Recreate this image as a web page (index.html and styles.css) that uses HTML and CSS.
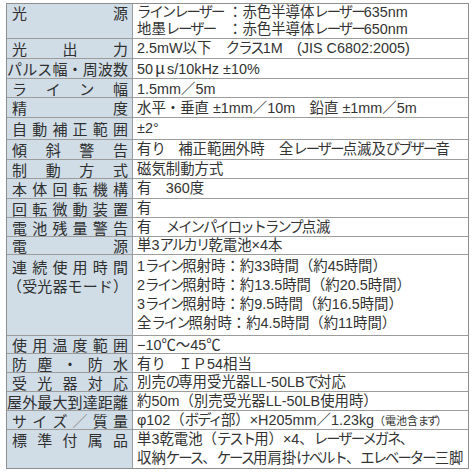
FILE: index.html
```html
<!DOCTYPE html>
<html lang="ja">
<head>
<meta charset="utf-8">
<title>仕様</title>
<link rel="stylesheet" href="styles.css">
</head>
<body>
<div class="spec">
  <div class="lab top l17"><span class="j"><span>光</span><span>源</span></span></div>
  <div class="val l17">
    <div><span class="pre"><span class="k">ラインレーザー</span></span>：赤色半導体<span class="k">レーザー</span>635nm</div>
    <div><span class="pre">地墨<span class="k">レーザー</span></span>：赤色半導体<span class="k">レーザー</span>650nm</div>
  </div>

  <div class="lab"><span class="j"><span>光</span><span>出</span><span>力</span></span></div>
  <div class="val"><div>2.5mW以下　<span class="k">クラス</span>1M　(JIS C6802:2005)</div></div>

  <div class="lab"><span class="j wide"><span>パ</span><span>ル</span><span>ス</span><span>幅</span><span>・</span><span>周</span><span>波</span><span>数</span></span></div>
  <div class="val"><div>50<span class="mu">μ</span>s/10kHz ±10%</div></div>

  <div class="lab"><span class="j"><span>ラ</span><span>イ</span><span>ン</span><span>幅</span></span></div>
  <div class="val"><div>1.5mm<span class="cjk">／</span>5m</div></div>

  <div class="lab"><span class="j"><span>精</span><span>度</span></span></div>
  <div class="val"><div>水平・垂直 ±1mm<span class="cjk">／</span>10m　鉛直 ±1mm<span class="cjk">／</span>5m</div></div>

  <div class="lab"><span class="j"><span>自</span><span>動</span><span>補</span><span>正</span><span>範</span><span>囲</span></span></div>
  <div class="val"><div>±2°</div></div>

  <div class="lab"><span class="j"><span>傾</span><span>斜</span><span>警</span><span>告</span></span></div>
  <div class="val"><div>有<span class="k">り</span>　補正範囲外時　全<span class="k">レーザー</span>点滅及<span class="k">びブザー</span>音</div></div>

  <div class="lab"><span class="j"><span>制</span><span>動</span><span>方</span><span>式</span></span></div>
  <div class="val"><div>磁気制動方式</div></div>

  <div class="lab"><span class="j"><span>本</span><span>体</span><span>回</span><span>転</span><span>機</span><span>構</span></span></div>
  <div class="val"><div>有　360度</div></div>

  <div class="lab"><span class="j"><span>回</span><span>転</span><span>微</span><span>動</span><span>装</span><span>置</span></span></div>
  <div class="val"><div>有</div></div>

  <div class="lab"><span class="j"><span>電</span><span>池</span><span>残</span><span>量</span><span>警</span><span>告</span></span></div>
  <div class="val"><div>有　<span class="k">メインパイロットランプ</span>点滅</div></div>

  <div class="lab"><span class="j"><span>電</span><span>源</span></span></div>
  <div class="val"><div>単3<span class="k">アルカリ</span>乾電池×4本</div></div>

  <div class="lab top p2">
    <span class="j"><span>連</span><span>続</span><span>使</span><span>用</span><span>時</span><span>間</span></span>
    <span class="j wide"><span>（</span><span>受</span><span>光</span><span>器</span><span>モ</span><span>ー</span><span>ド</span><span>）</span></span>
  </div>
  <div class="val">
    <div>1<span class="k">ライン</span>照射時：約33時間（約45時間）</div>
    <div>2<span class="k">ライン</span>照射時：約13.5時間（約20.5時間）</div>
    <div>3<span class="k">ライン</span>照射時：約9.5時間（約16.5時間）</div>
    <div>全<span class="k">ライン</span>照射時：約4.5時間（約11時間）</div>
  </div>

  <div class="lab"><span class="j"><span>使</span><span>用</span><span>温</span><span>度</span><span>範</span><span>囲</span></span></div>
  <div class="val"><div>−10<span class="cjk">℃〜</span>45<span class="cjk">℃</span></div></div>

  <div class="lab"><span class="j"><span>防</span><span>塵</span><span>・</span><span>防</span><span>水</span></span></div>
  <div class="val"><div>有<span class="k">り</span>　<span class="cjk">ＩＰ</span>54相当</div></div>

  <div class="lab"><span class="j"><span>受</span><span>光</span><span>器</span><span>対</span><span>応</span></span></div>
  <div class="val"><div>別売<span class="k">の</span>専用受光器LL-50LB<span class="k">で</span>対応</div></div>

  <div class="lab"><span class="j wide"><span>屋</span><span>外</span><span>最</span><span>大</span><span>到</span><span>達</span><span>距</span><span>離</span></span></div>
  <div class="val"><div>約50m（別売受光器LL-50LB使用時）</div></div>

  <div class="lab"><span class="j"><span>サ</span><span>イ</span><span>ズ</span><span class="slash">／</span><span>質</span><span>量</span></span></div>
  <div class="val"><div>φ102（<span class="k">ボディ</span>部）×H205mm<span class="cjk">／</span>1.23kg<span class="small">（電池含<span class="k">まず</span>）</span></div></div>

  <div class="lab top"><span class="j"><span>標</span><span>準</span><span>付</span><span>属</span><span>品</span></span></div>
  <div class="val">
    <div>単3乾電池（<span class="k">テスト</span>用）×4、<span class="k">レーザーメガネ</span>、</div>
    <div>収納<span class="k">ケース</span>、<span class="k">ケース</span>用肩掛<span class="k">けベルト</span>、<span class="k">エレベーター</span>三脚</div>
  </div>
</div>
</body>
</html>
```

FILE: styles.css
```css
html, body {
  margin: 0;
  padding: 0;
  background: #ffffff;
}

body {
  padding: 3px 0 0 6px;
  font-family: "Liberation Sans", "Noto Sans CJK JP", sans-serif;
  font-size: 15px;
  color: #333333;
}

.spec {
  display: grid;
  grid-template-columns: 125px 335px;
  grid-template-rows: 34px 19px 19px 18px 19px 21px 19px 18px 19px 18px 18px 17px 80px 17px 18px 18px 18px 18px 38px;
  gap: 1px;
  width: max-content;
  background: #9c9c9c;
  border: 1px solid #8e8e8e;
}

.lab {
  background: #d0dde7;
  display: flex;
  flex-direction: column;
  justify-content: center;
  padding: 0 4px 0 5px;
  line-height: 19px;
  font-family: "Noto Sans CJK JP", sans-serif;
  color: #2f2f2f;
}

.lab.top {
  justify-content: flex-start;
}

.lab.p2 {
  padding-top: 2px;
}

.j {
  display: flex;
  justify-content: space-between;
}

.j.wide {
  margin-left: -5px;
}

.slash {
  color: #8a8a8a;
}

.val {
  background: #ffffff;
  display: flex;
  flex-direction: column;
  justify-content: center;
  padding-left: 4px;
  font-size: 14.4px;
  line-height: 19px;
  white-space: nowrap;
}

.k {
  letter-spacing: -2px;
}

.l17 {
  line-height: 17px;
}

.pre {
  display: inline-block;
  width: 91px;
}

.cjk {
  font-family: "Noto Sans CJK JP", sans-serif;
}

.mu {
  font-family: "Noto Sans CJK JP", sans-serif;
  font-size: 16px;
  margin: 0 2px;
}

.small {
  font-size: 11px;
}
```
